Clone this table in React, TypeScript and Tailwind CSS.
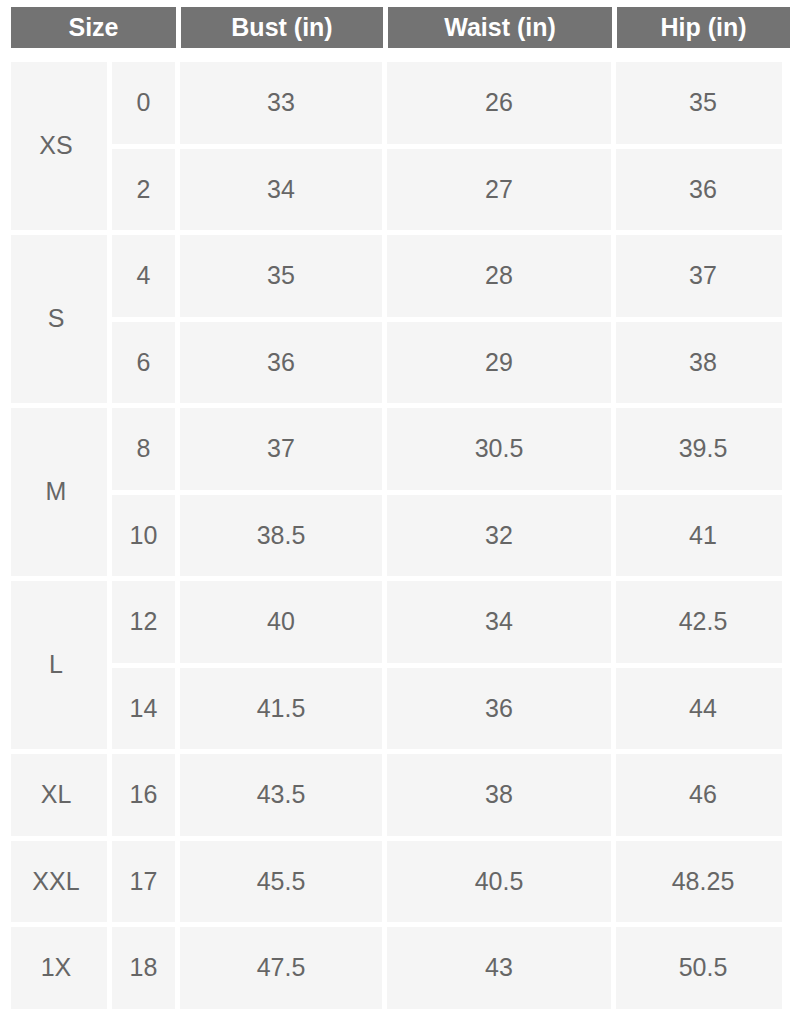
import { Fragment } from "react";

type Row = { num: string; bust: string; waist: string; hip: string };
type Group = { label: string; rows: Row[] };

const groups: Group[] = [
  { label: "XS", rows: [
    { num: "0", bust: "33", waist: "26", hip: "35" },
    { num: "2", bust: "34", waist: "27", hip: "36" },
  ] },
  { label: "S", rows: [
    { num: "4", bust: "35", waist: "28", hip: "37" },
    { num: "6", bust: "36", waist: "29", hip: "38" },
  ] },
  { label: "M", rows: [
    { num: "8", bust: "37", waist: "30.5", hip: "39.5" },
    { num: "10", bust: "38.5", waist: "32", hip: "41" },
  ] },
  { label: "L", rows: [
    { num: "12", bust: "40", waist: "34", hip: "42.5" },
    { num: "14", bust: "41.5", waist: "36", hip: "44" },
  ] },
  { label: "XL", rows: [{ num: "16", bust: "43.5", waist: "38", hip: "46" }] },
  { label: "XXL", rows: [{ num: "17", bust: "45.5", waist: "40.5", hip: "48.25" }] },
  { label: "1X", rows: [{ num: "18", bust: "47.5", waist: "43", hip: "50.5" }] },
];

const cell = "bg-[#f5f5f5] flex items-center justify-center";

export default function App() {
  return (
    <div className="w-[794px] h-[1019px] bg-white pl-[11px] pt-[7px] text-[#666] text-[25px]" style={{ fontFamily: '"Liberation Sans", Arial, sans-serif' }}>
      {/* header */}
      <div className="grid grid-cols-[165px_202px_224px_173px] gap-x-[5px] h-[41px] text-white font-bold text-[25px]">
        {["Size", "Bust (in)", "Waist (in)", "Hip (in)"].map((h) => (
          <div key={h} className="bg-[#737373] flex items-center justify-center">{h}</div>
        ))}
      </div>

      {/* body */}
      <div className="mt-[14px] grid grid-cols-[96px_63px_202px_224px_166px] grid-rows-[repeat(11,81.5px)] gap-[5px]">
        {groups.map((g) => (
          <Fragment key={g.label}>
            <div className={cell + " pr-[6px]"} style={{ gridRow: `span ${g.rows.length}` }}>{g.label}</div>
            {g.rows.map((r) => (
              <Fragment key={r.num}>
                <div className={cell} style={{ gridColumn: 2 }}>{r.num}</div>
                <div className={cell}>{r.bust}</div>
                <div className={cell}>{r.waist}</div>
                <div className={cell + " pl-[8px]"}>{r.hip}</div>
              </Fragment>
            ))}
          </Fragment>
        ))}
      </div>
    </div>
  );
}
